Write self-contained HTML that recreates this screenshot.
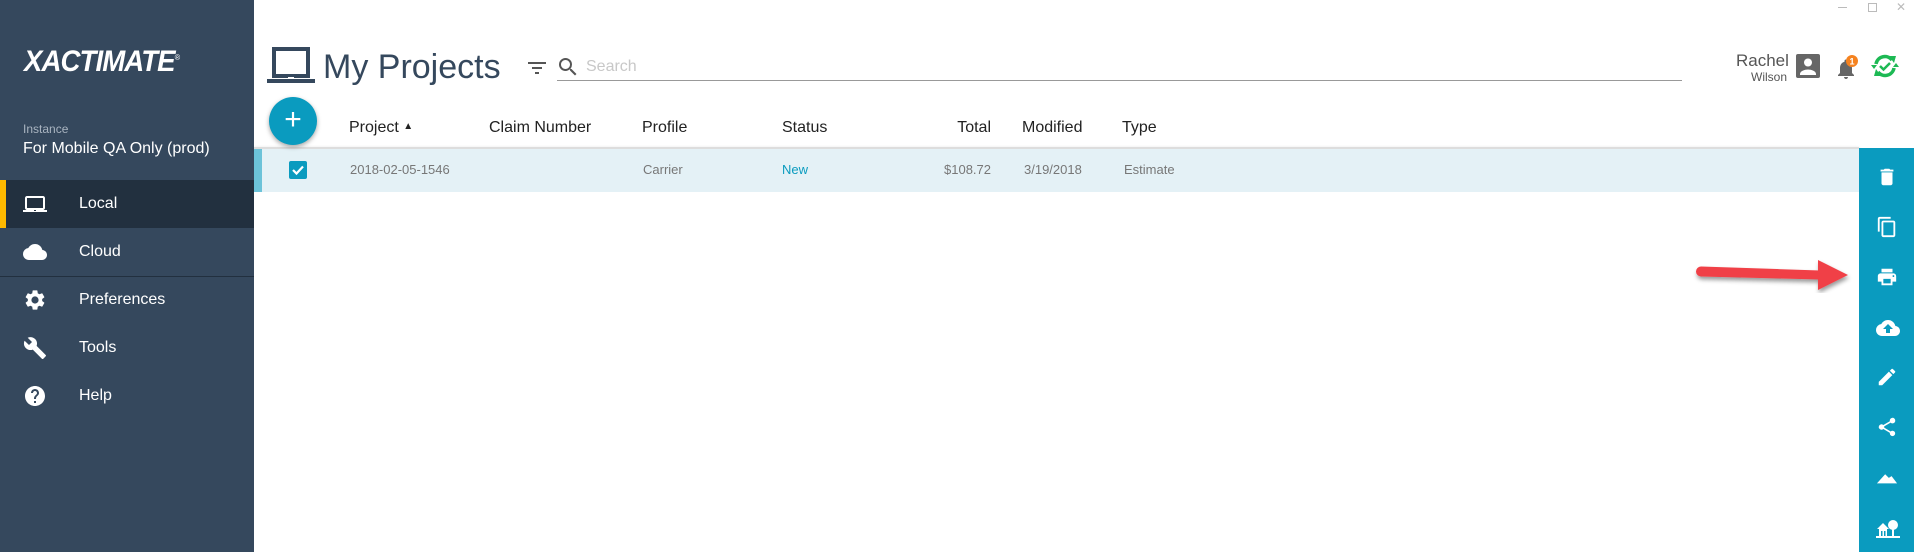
<!DOCTYPE html>
<html><head><meta charset="utf-8"><style>
*{margin:0;padding:0;box-sizing:border-box}
body{width:1914px;height:552px;overflow:hidden;background:#fff;font-family:"Liberation Sans",sans-serif;position:relative}
.abs{position:absolute}
#side{left:0;top:0;width:254px;height:552px;background:#35485d;color:#fff}
.nav{position:absolute;left:0;width:254px;height:48px;font-size:16px;line-height:48px}
.nav span{position:absolute;left:79px}
.nav svg{position:absolute;left:23px;top:12px}
.hd{position:absolute;top:119px;font-size:16px;color:#222}
.rw{position:absolute;top:162px;font-size:13px;color:#777}
.tb svg{position:absolute;left:17px}
</style></head><body>
<div id="side" class="abs">
  <div class="abs" style="left:24px;top:45px;font-size:30px;font-weight:bold;font-style:italic;letter-spacing:-1px;transform:scaleX(0.92);transform-origin:left">XACTIMATE<sup style="font-size:8px;font-weight:normal">®</sup></div>
  <div class="abs" style="left:23px;top:122px;font-size:12px;color:#a9b4c0">Instance</div>
  <div class="abs" style="left:23px;top:140px;font-size:16px">For Mobile QA Only (prod)</div>
  <div class="nav" style="top:180px;background:#22303f"><div class="abs" style="left:0;top:0;width:6px;height:48px;background:#ffb900"></div>
    <svg width="24" height="24" viewBox="0 0 24 24"><path fill="#fff" d="M20 18c1.1 0 2-.9 2-2V6c0-1.1-.9-2-2-2H4c-1.1 0-2 .9-2 2v10c0 1.1.9 2 2 2H0v2h24v-2h-4zM4 6h16v10H4V6zm7 12h2v1h-2z"/></svg><span>Local</span></div>
  <div class="nav" style="top:228px"><svg width="24" height="24" viewBox="0 0 24 24"><path fill="#fff" d="M19.35 10.04A7.49 7.49 0 0 0 12 4C9.11 4 6.6 5.64 5.35 8.04A5.99 5.99 0 0 0 0 14c0 3.310 2.69 6 6 6h13c2.76 0 5-2.24 5-5 0-2.64-2.05-4.78-4.65-4.96z"/></svg><span>Cloud</span></div>
  <div class="abs" style="left:0;top:276px;width:254px;height:1px;background:#22303f"></div>
  <div class="nav" style="top:276px"><svg width="24" height="24" viewBox="0 0 24 24"><path fill="#fff" d="M19.14 12.94c.04-.3.06-.61.06-.94 0-.32-.02-.64-.07-.94l2.030-1.58a.49.49 0 0 0 .12-.61l-1.92-3.32a.49.49 0 0 0-.59-.22l-2.39.96c-.5-.38-1.03-.7-1.62-.94l-.36-2.54a.48.48 0 0 0-.48-.41h-3.84c-.24 0-.43.17-.47.41l-.36 2.54c-.59.24-1.13.57-1.62.94l-2.39-.96a.49.49 0 0 0-.59.22L2.74 8.87c-.12.21-.08.47.12.61l2.03 1.58c-.05.3-.09.63-.09.94s.02.64.07.94l-2.03 1.58a.49.49 0 0 0-.12.61l1.92 3.32c.12.22.37.29.59.22l2.39-.96c.5.38 1.03.7 1.62.94l.36 2.54c.05.24.24.41.48.41h3.84c.24 0 .44-.17.47-.41l.36-2.54c.59-.24 1.13-.56 1.62-.94l2.39.96c.22.08.47 0 .59-.22l1.92-3.32a.48.48 0 0 0-.12-.61l-2.01-1.58zM12 15.6A3.6 3.6 0 1 1 12 8.4a3.6 3.6 0 0 1 0 7.2z"/></svg><span>Preferences</span></div>
  <div class="nav" style="top:324px"><svg width="24" height="24" viewBox="0 0 24 24"><path fill="#fff" d="M22.7 19l-9.1-9.1c.9-2.3.4-5-1.5-6.9-2-2-5-2.4-7.4-1.3L9 6 6 9 1.6 4.7C.4 7.1.9 10.1 2.9 12.1c1.9 1.9 4.6 2.4 6.9 1.5l9.1 9.1c.4.4 1 .4 1.4 0l2.3-2.3c.5-.4.5-1.1.1-1.4z"/></svg><span>Tools</span></div>
  <div class="nav" style="top:372px"><svg width="24" height="24" viewBox="0 0 24 24"><path fill="#fff" d="M12 2C6.48 2 2 6.48 2 12s4.48 10 10 10 10-4.48 10-10S17.52 2 12 2zm1 17h-2v-2h2v2zm2.07-7.75l-.9.92C13.45 12.9 13 13.5 13 15h-2v-.5c0-1.1.45-2.1 1.17-2.83l1.24-1.26c.37-.36.59-.86.59-1.41 0-1.1-.9-2-2-2s-2 .9-2 2H8c0-2.21 1.79-4 4-4s4 1.79 4 4c0 .88-.36 1.68-.93 2.25z"/></svg><span>Help</span></div>
</div>

<div class="abs" style="left:1838px;top:7px;width:9px;height:1px;background:#bbb"></div>
<div class="abs" style="left:1868px;top:3px;width:9px;height:9px;border:1px solid #bbb"></div>
<div class="abs" style="left:1896px;top:0px;font-size:12px;color:#bbb">✕</div>

<svg class="abs" style="left:267px;top:47px" width="48" height="38" viewBox="0 0 48 38"><path fill="#35485d" d="M5 0h38v31H5zM9 4v23h30V4zM0 32h48v4H0z"/><rect x="21" y="30" width="6" height="2" fill="#fff"/></svg>
<div class="abs" style="left:323px;top:48px;font-size:34px;color:#35485d">My Projects</div>
<svg class="abs" style="left:525px;top:56px" width="24" height="24" viewBox="0 0 24 24"><path fill="#555" d="M3 6h18v2H3zm4 5h10v2H7zm3 5h4v2h-4z"/></svg>
<svg class="abs" style="left:556px;top:55px" width="24" height="24" viewBox="0 0 24 24"><path fill="#555" d="M15.5 14h-.79l-.28-.27A6.47 6.47 0 0 0 16 9.5 6.5 6.5 0 1 0 9.5 16c1.61 0 3.09-.59 4.23-1.57l.27.28v.79l5 4.99L20.49 19l-4.99-5zm-6 0C7.01 14 5 11.99 5 9.5S7.01 5 9.5 5 14 7.01 14 9.5 11.99 14 9.5 14z"/></svg>
<div class="abs" style="left:586px;top:58px;font-size:16px;color:#c8c8c8">Search</div>
<div class="abs" style="left:557px;top:80px;width:1125px;height:1px;background:#999"></div>

<div class="abs" style="left:1736px;top:51px;font-size:17px;color:#555">Rachel</div>
<div class="abs" style="left:1751px;top:70px;font-size:12px;color:#555">Wilson</div>
<svg class="abs" style="left:1796px;top:54px" width="24" height="24" viewBox="0 0 24 24"><rect x="0" y="0" width="24" height="24" rx="2" fill="#666"/><circle cx="12" cy="8.5" r="4" fill="#fff"/><path fill="#fff" d="M4 20c0-3 5-4.5 8-4.5s8 1.5 8 4.5v1H4z"/></svg>
<svg class="abs" style="left:1834px;top:54px" width="24" height="26" viewBox="0 0 24 26"><path fill="#666" d="M12 25c1.1 0 2-.9 2-2h-4c0 1.1.9 2 2 2zm6-6v-5c0-3-1.6-5.6-4.5-6.3V7a1.5 1.5 0 0 0-3 0v.7C7.6 8.4 6 11 6 14v5l-2 2v1h16v-1l-2-2z"/><circle cx="18" cy="7" r="6" fill="#f5821f"/><text x="18" y="10.5" font-size="9" fill="#fff" text-anchor="middle" font-family="Liberation Sans" font-weight="bold">1</text></svg>
<svg class="abs" style="left:1870px;top:52px" width="30" height="28" viewBox="0 0 30 28"><g fill="none" stroke="#1db954" stroke-width="3.5"><path d="M6 12a9 9 0 0 1 16-4"/><path d="M24 16a9 9 0 0 1-16 4"/></g><path fill="#1db954" d="M19 4l7 0-2 7zM11 24l-7 0 2-7zM1 13h6l-3 4zM29 15h-6l3-4z"/><path d="M10 14l3.5 3.5L20 11" stroke="#1db954" stroke-width="2.5" fill="none"/></svg>

<div class="abs" style="left:254px;top:147px;width:1605px;height:2px;background:#ddd;box-shadow:0 1px 3px rgba(0,0,0,.2)"></div>
<div class="hd" style="left:349px">Project <span style="font-size:10px;position:relative;top:-3px">▲</span></div>
<div class="hd" style="left:489px">Claim Number</div>
<div class="hd" style="left:642px">Profile</div>
<div class="hd" style="left:782px">Status</div>
<div class="hd" style="left:946px;width:45px;text-align:right">Total</div>
<div class="hd" style="left:1022px">Modified</div>
<div class="hd" style="left:1122px">Type</div>

<div class="abs" style="left:254px;top:149px;width:1605px;height:43px;background:#e4f1f6"></div>
<div class="abs" style="left:254px;top:149px;width:8px;height:43px;background:#6cc3d9"></div>
<div class="abs" style="left:289px;top:161px;width:18px;height:18px;background:#0a9bbf;border-radius:2px"></div>
<svg class="abs" style="left:289px;top:161px" width="18" height="18"><path d="M4 9l3.5 3.5L14 5.5" stroke="#fff" stroke-width="2.2" fill="none"/></svg>
<div class="rw" style="left:350px">2018-02-05-1546</div>
<div class="rw" style="left:643px">Carrier</div>
<div class="rw" style="left:782px;color:#0a9bbf">New</div>
<div class="rw" style="left:921px;width:70px;text-align:right">$108.72</div>
<div class="rw" style="left:1024px">3/19/2018</div>
<div class="rw" style="left:1124px">Estimate</div>

<div class="abs" style="left:269px;top:97px;width:48px;height:48px;border-radius:50%;background:#0a9bbf;box-shadow:0 2px 5px rgba(0,0,0,.35);color:#fff;font-size:30px;text-align:center;line-height:46px">+</div>

<div class="abs tb" style="left:1859px;top:148px;width:55px;height:404px;background:#0a9bbf">
  <svg style="top:18px" width="22" height="22" viewBox="0 0 24 24"><path fill="#fff" d="M6 19c0 1.1.9 2 2 2h8c1.1 0 2-.9 2-2V7H6v12zM19 4h-3.5l-1-1h-5l-1 1H5v2h14V4z"/></svg>
  <svg style="top:68px" width="22" height="22" viewBox="0 0 24 24"><path fill="#fff" d="M16 1H4c-1.1 0-2 .9-2 2v14h2V3h12V1zm3 4H8c-1.1 0-2 .9-2 2v14c0 1.1.9 2 2 2h11c1.1 0 2-.9 2-2V7c0-1.1-.9-2-2-2zm0 16H8V7h11v14z"/></svg>
  <svg style="top:118px" width="22" height="22" viewBox="0 0 24 24"><path fill="#fff" d="M19 8H5c-1.66 0-3 1.34-3 3v6h4v4h12v-4h4v-6c0-1.66-1.34-3-3-3zm-3 11H8v-5h8v5zm3-7c-.55 0-1-.45-1-1s.45-1 1-1 1 .45 1 1-.45 1-1 1zm-1-9H6v4h12V3z"/></svg>
  <svg style="top:168px" width="24" height="24" viewBox="0 0 24 24"><path fill="#fff" d="M19.35 10.04A7.49 7.49 0 0 0 12 4C9.11 4 6.6 5.64 5.35 8.04A5.99 5.99 0 0 0 0 14c0 3.31 2.69 6 6 6h13c2.76 0 5-2.24 5-5 0-2.64-2.05-4.78-4.65-4.96zM14 13v4h-4v-4H7l5-5 5 5h-3z"/></svg>
  <svg style="top:218px" width="22" height="22" viewBox="0 0 24 24"><path fill="#fff" d="M3 17.25V21h3.75L17.81 9.94l-3.75-3.75L3 17.25zM20.71 7.04a1 1 0 0 0 0-1.41l-2.34-2.34a1 1 0 0 0-1.41 0l-1.83 1.83 3.75 3.75 1.83-1.83z"/></svg>
  <svg style="top:268px" width="22" height="22" viewBox="0 0 24 24"><path fill="#fff" d="M18 16.08c-.76 0-1.44.3-1.96.77L8.91 12.7c.05-.23.09-.46.09-.7s-.04-.47-.09-.7l7.05-4.11A2.99 2.99 0 0 0 21 5a3 3 0 1 0-5.91.7L8.04 9.81A3 3 0 1 0 6 15c.79 0 1.5-.31 2.04-.81l7.12 4.16c-.05.21-.08.43-.08.65A2.92 2.92 0 1 0 18 16.08z"/></svg>
  <svg style="top:318px" width="22" height="22" viewBox="0 0 24 24"><path fill="#fff" d="M1 19L10 9l4 4 3-2 6 8z"/></svg>
  <svg style="top:368px" width="24" height="24" viewBox="0 0 24 24"><path fill="#fff" d="M1 13l6-6 6 6h-2v7H3v-7zM17 4a5 5 0 1 1 0 10 5 5 0 0 1 0-10zM16 13h2v7h-2zM0 20h24v2H0z"/><path fill="#0a9bbf" d="M5 15h1.5v5H5zM8 15h1.5v5H8z"/></svg>
</div>

<svg class="abs" style="left:1690px;top:255px" width="170" height="45" viewBox="0 0 170 45"><defs><filter id="s"><feDropShadow dx="1" dy="3" stdDeviation="2" flood-opacity=".4"/></filter></defs><g filter="url(#s)" fill="#f04046"><path d="M11 11.5L130 15.5 130 24.5 11 21.5A5 5 0 0 1 11 11.5z"/><path d="M128 5L158 20 128 35z"/></g></svg>
</body></html>
